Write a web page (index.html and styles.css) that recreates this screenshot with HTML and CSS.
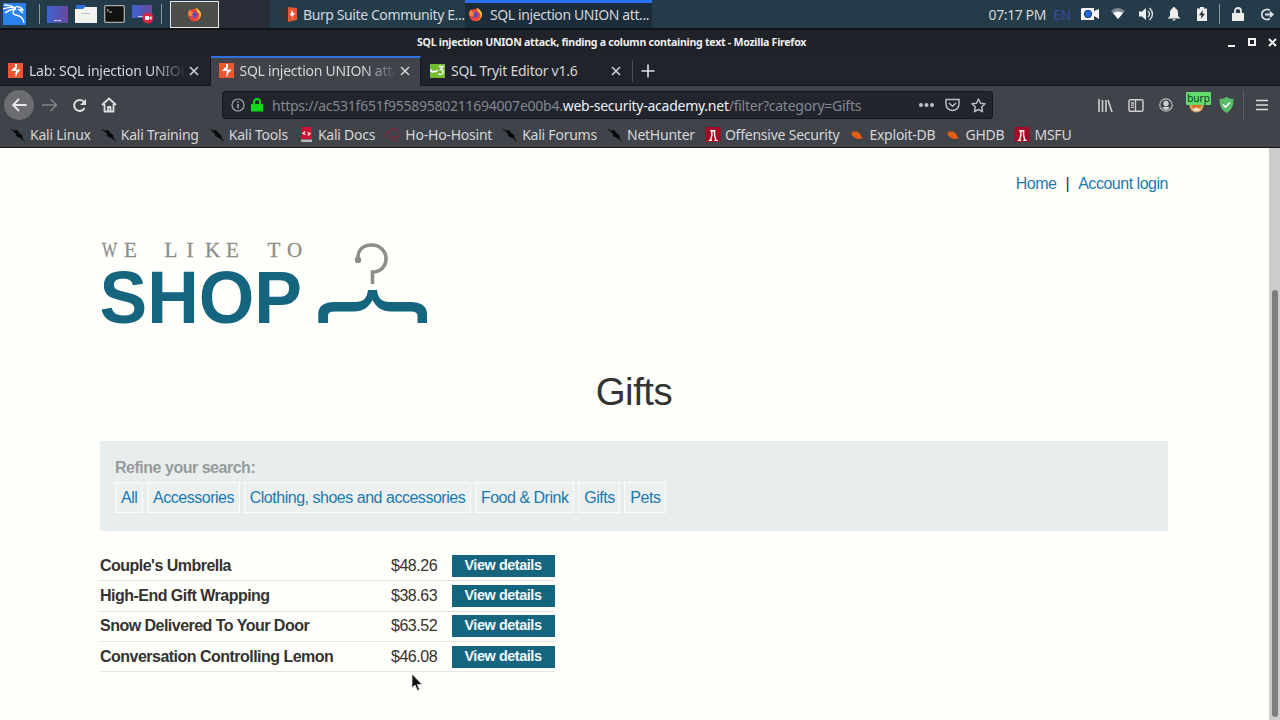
FILE: index.html
```
<!DOCTYPE html>
<html lang="en">
<head>
  <meta charset="UTF-8">
  <title>SQL injection UNION attack, finding a column containing text</title>
  <link rel="stylesheet" href="styles.css">
</head>
<body>

  <!-- shared icons -->
  <svg class="symbols">
    <symbol id="i-bolt" viewBox="0 0 16 16">
      <path fill="#ee5533" d="M0 0h16v16H0z"/>
      <path fill="#fff" d="M7.500 1h2v4L8 7h5.500L9.500 11.500V13L8 15V10l.8-1.500H3L7.500 4z"/>
    </symbol>
    <symbol id="i-fox" viewBox="0 0 16 16">
      <circle cx="8" cy="8.500" r="6.700" fill="#e8433c"/>
      <path fill="#fb9a2c" d="M9 1c3 1 6 4 6 7.500A7 7 0 0 1 8 15c3-1 5-3 5-6S11 5 9 1z"/>
      <path fill="#ffd33d" d="M9.500 .8C13 3 15.500 6 14.500 10c0-3-2-3.500-3.500-5z"/>
      <circle cx="7.600" cy="8.300" r="3" fill="#6246c4"/>
      <path fill="#fb8530" d="M1.300 9c-.3-3 .5-5 2-6.500L4.500 5 7 5.500 5.500 7.500l1 2.500z"/>
    </symbol>
    <symbol id="i-kali" viewBox="0 0 16 16">
      <path fill="#08090b" d="M0 1.500l4.500 2L7 3l3 3.500 3 2.500-1 1 3.500 5-4.500-3.500L8 10 5.500 8.500l1-1L4 5z"/>
    </symbol>
    <symbol id="i-offsec" viewBox="0 0 16 16">
      <path fill="#a30b24" d="M0 0h16v16H0z"/>
      <path fill="none" stroke="#fff" stroke-width="1.500" d="M5 4h5.500M6.800 4v5L5.300 14M9.700 4v5l1.300 5M3.500 14.300h3.500M9.500 14.300h3.500"/>
    </symbol>
    <symbol id="i-edb" viewBox="0 0 16 16">
      <path fill="#e65c14" d="M2.500 6L4 4.500l2 .5 1-1 4 2.500 1 2.500 1.500 2-2.500 1-4-.5L5 10 3 8.500z"/>
    </symbol>
    <symbol id="i-close" viewBox="0 0 10 10">
      <path fill="none" stroke="#d6d7d9" stroke-width="1.500" d="M1 1l8 8M9 1L1 9"/>
    </symbol>
  </svg>

  <div class="panel">
    <div class="launchers">
      <svg width="23" height="22" viewBox="0 0 23 22">
        <rect width="23" height="22" rx="1" fill="#2b82ee"/>
        <path fill="none" stroke="#fff" stroke-width="1.300" d="M1 2c5 0 8 1 11 3M0 6c5-2 9-2 13-1M2 10c4-3 7-4 11-4M12 4c3-1 6 0 8 3l-3-.5M13 6c-4 2-4 5 0 6s7 2 8 8M15 6l5 4"/>
      </svg>
      <span class="line"></span>
      <svg width="21" height="17" viewBox="0 0 21 17">
        <defs><linearGradient id="desk"><stop stop-color="#3d63d2"/><stop offset="1" stop-color="#6b489d"/></linearGradient></defs>
        <path fill="url(#desk)" d="M0 0h21v17H0z"/><path stroke="#dfe3f5" stroke-dasharray="2 .5" d="M7 14.500h7"/>
      </svg>
      <svg width="22" height="20" viewBox="0 0 22 20">
        <path fill="#2c6fe0" d="M1 1h9l2 3h8v6H1z"/><path fill="#f2f2f0" d="M0 5h8l2-2h12v16H0z"/><path stroke="#c6c6c6" d="M6 9.500h9"/>
      </svg>
      <svg width="21" height="18" viewBox="0 0 21 18">
        <rect x=".7" y=".7" width="19.600" height="16.600" rx="1" fill="#11120f" stroke="#a9aaa7" stroke-width="1.300"/>
        <path fill="none" stroke="#ddd" stroke-width=".9" d="M3 4l1.500 1.200L3 6.500M5 7h3"/>
      </svg>
      <svg width="22" height="20" viewBox="0 0 22 20">
        <path fill="url(#desk)" d="M0 1h20v13H0z"/><path stroke="#ccd" d="M6 12.500h5"/>
        <circle cx="16" cy="14" r="5.500" fill="#da2341"/><path fill="#fff" d="M13 12h4v4h-4zM17 14l2.500-2v4z"/>
      </svg>
      <span class="line"></span>
    </div>
    <div class="active-launcher"><svg width="15" height="15"><use href="#i-fox"/></svg></div>
    <div class="panel-gap"></div>
    <div class="task task-burp">
      <svg width="16" height="15" viewBox="0 0 16 15"><path fill="#3a3536" d="M0 2l8-1v13l-7-2z"/><path fill="#e8542f" d="M7 0l9 1v12l-9 2z"/><path fill="#fff" d="M11 2.500l1 3.500h2l-2.500 3.500L11 12V8.500H9z"/></svg>
      <span>Burp Suite Community E...</span>
    </div>
    <div class="task task-firefox">
      <svg width="15" height="15"><use href="#i-fox"/></svg>
      <span>SQL injection UNION att...</span>
    </div>
    <div class="tray">
      <span class="clock">07:17 PM</span>
      <span class="lang">EN</span>
      <svg width="19" height="12" viewBox="0 0 19 12"><path fill="#f5f5f5" d="M1 0h12v3l5-2v10l-5-3v4H0V1z"/><circle cx="7" cy="6" r="3.700" fill="#2569cf" stroke="#183c70"/></svg>
      <svg class="wifi" width="14" height="12" viewBox="0 0 14 12"><path fill="#7d8a92" d="M0 3q7-6 14 0L7 11z"/><path fill="#fff" d="M2 5q5-3 10 0L7 11z"/></svg>
      <svg class="sound" width="15" height="14" viewBox="0 0 15 14"><path fill="#eee" d="M0 4.500h3L7 1v12L3 9.500H0z"/><path fill="none" stroke="#ddd" stroke-width="1.500" d="M9 4q3 3 0 6M10.500 1q6 6 0 12"/></svg>
      <svg class="bell" width="14" height="14" viewBox="0 0 14 14"><path fill="#eeedeb" d="M7 0q1.300 0 1.300 1.300Q11 2.500 11 6v3l2.500 2.500H.5L3 9V6q0-3.500 2.700-4.700Q5.700 0 7 0zM5 12.200h4L7 14z"/></svg>
      <svg class="battery" width="10" height="14" viewBox="0 0 10 14"><path fill="#eeedeb" d="M3 0h4v1.500h3V14H0V1.500h3z"/><path fill="#26303a" d="M6 3L2 8.200h2.500L4 12l4-5.200H5.500z"/></svg>
      <span class="line tray-line"></span>
      <svg class="lock" width="12" height="14" viewBox="0 0 12 14"><path fill="#eeedeb" d="M0 6h12v8H0z"/><path fill="none" stroke="#eeedeb" stroke-width="1.800" d="M3 6V4a3 3 0 0 1 6 0v2"/></svg>
      <svg class="logout" width="14" height="13" viewBox="0 0 14 13"><path fill="none" stroke="#dedfdf" stroke-width="1.800" d="M9.800 2.500A5 5 0 1 0 9.800 10.500M5 6.500h7M10 4l2.700 2.500L10 9"/></svg>
    </div>
  </div>

  <div class="titlebar">
    <span class="window-title">SQL injection UNION attack, finding a column containing text - Mozilla Firefox</span>
    <svg class="window-buttons" width="50" height="12" viewBox="0 0 50 12">
      <path fill="none" stroke="#f0f0f0" stroke-width="2" d="M1 10h7M22 3h6v6h-6zM42 3l7 7M49 3l-7 7"/>
    </svg>
  </div>

  <div class="tabs">
    <div class="tab">
      <svg width="15" height="15"><use href="#i-bolt"/></svg>
      <span class="tab-title fade">Lab: SQL injection UNION</span>
      <svg width="10" height="10"><use href="#i-close"/></svg>
    </div>
    <div class="tab tab-active">
      <svg width="15" height="15"><use href="#i-bolt"/></svg>
      <span class="tab-title fade">SQL injection UNION atta</span>
      <svg width="10" height="10"><use href="#i-close"/></svg>
    </div>
    <div class="tab tab-last">
      <svg width="15" height="14" viewBox="0 0 15 14"><path fill="#73bb31" d="M0 0h15v14H0z"/><path fill="none" stroke="#fff" stroke-width="1.400" d="M1 5v2q1.500 2 3 0 1.500 2 3.500-1M9 2.500h4L10.500 5.500q3 0 2.500 3T8.500 10"/></svg>
      <span class="tab-title">SQL Tryit Editor v1.6</span>
      <svg width="10" height="10"><use href="#i-close"/></svg>
    </div>
    <svg class="new-tab" width="14" height="14" viewBox="0 0 14 14"><path stroke="#e0e1e2" stroke-width="1.600" d="M7 .5v13M.5 7h13"/></svg>
  </div>

  <div class="toolbar">
    <div class="nav">
      <div class="back"><svg width="16" height="14" viewBox="0 0 16 14"><path fill="none" stroke="#e8e8e8" stroke-width="1.800" d="M15.500 7H2M8 1L2 7l6 6"/></svg></div>
      <svg width="16" height="14" viewBox="0 0 16 14"><path fill="none" stroke="#818388" stroke-width="1.500" d="M0 7h14M8.500 1l6 6-6 6"/></svg>
      <svg width="15" height="15" viewBox="0 0 15 15"><path fill="none" stroke="#dedfe0" stroke-width="1.900" d="M11.500 3.500A5.500 5.500 0 1 0 12.500 10"/><path fill="#dedfe0" d="M14 1v6H8z"/></svg>
      <svg width="16" height="16" viewBox="0 0 16 16"><path fill="none" stroke="#dedfe0" stroke-width="1.800" stroke-linejoin="round" d="M1 8l7-6.500L15 8M3.500 7v7.500h9V7M7 14v-4h2.500v4"/></svg>
    </div>
    <div class="urlbar">
      <svg width="14" height="14" viewBox="0 0 14 14"><circle cx="7" cy="7" r="6" fill="none" stroke="#a5a6aa" stroke-width="1.200"/><path stroke="#a5a6aa" stroke-width="1.500" d="M7 6v4.500M7 3.300v1.500"/></svg>
      <svg width="12" height="14" viewBox="0 0 12 14"><path fill="#13d813" d="M0 6h12v7.500H0z"/><path fill="none" stroke="#13d813" stroke-width="1.900" d="M3 6V4a3 3 0 0 1 6 0v2"/></svg>
      <span class="url">https://ac531f651f95589580211694007e00b4.<b>web-security-academy.net</b>/filter?category=Gifts</span>
      <svg width="15" height="4" viewBox="0 0 15 4"><path fill="#c2c2c5" d="M2 0a2 2 0 1 1 0 4 2 2 0 0 1 0-4zM7.500 0a2 2 0 1 1 0 4 2 2 0 0 1 0-4zM13 0a2 2 0 1 1 0 4 2 2 0 0 1 0-4z"/></svg>
      <svg class="pocket" width="15" height="14" viewBox="0 0 15 14"><path fill="none" stroke="#bbbcbf" stroke-width="1.500" d="M1 1.500h13V6a6.500 6.500 0 0 1-13 0zM4 5l3.500 3.300L11 5"/></svg>
      <svg class="star" width="15" height="15" viewBox="0 0 15 15"><path fill="none" stroke="#bbbcbf" stroke-width="1.500" stroke-linejoin="round" d="M7.500 1l2 4.200 4.500.6-3.300 3.200.8 4.700-4-2.200-4 2.200.8-4.700L1 5.800l4.500-.6z"/></svg>
    </div>
    <div class="tools">
      <svg width="15" height="13" viewBox="0 0 15 13"><path stroke="#cdced0" stroke-width="1.600" d="M1 0v13M4.500 1v12M8 1v12M10 1l4 12"/></svg>
      <svg width="16" height="13" viewBox="0 0 16 13"><rect x="1" y=".8" width="14" height="11.500" rx="1.500" fill="none" stroke="#cdced0" stroke-width="1.500"/><path stroke="#cdced0" stroke-width="1.300" d="M7.500 1v11M3 4h3M3 6.200h3M3 8.400h3"/></svg>
      <svg width="14" height="14" viewBox="0 0 14 14"><circle cx="7" cy="7" r="6.200" fill="none" stroke="#b9babd" stroke-width="1.200"/><circle cx="7" cy="5.500" r="2.700" fill="#cdced0"/><path fill="#cdced0" d="M3 10q4-2.500 8 0-4 4-8 0z"/></svg>
      <div class="foxy">
        <svg width="15" height="15" viewBox="0 0 15 15"><circle cx="7.500" cy="7.500" r="7" fill="#d9a46c"/><path fill="#f2e2c8" d="M3 8l4.500 2L12 8q0 5-4.500 5T3 8z"/><path fill="#e06b1f" d="M2 6h11l-2 5-3.500-2L4 11z"/></svg>
        <span class="badge">burp</span>
      </div>
      <svg width="15" height="16" viewBox="0 0 15 16"><path fill="#58bd68" d="M7.500 0q3 2 7 2 .5 10-7 14Q0 12 .5 2q4 0 7-2z"/><path fill="none" stroke="#fff" stroke-width="1.600" d="M4 7.500L6.500 10 11 5.500"/></svg>
      <span class="tool-line"></span>
      <svg class="menu" width="12" height="12" viewBox="0 0 12 12"><path stroke="#dcdddd" stroke-width="1.500" d="M0 1.500h12M0 6h12M0 10.500h12"/></svg>
    </div>
  </div>

  <div class="bookmarks">
    <div class="bookmark"><svg width="16" height="16"><use href="#i-kali"/></svg>Kali Linux</div>
    <div class="bookmark"><svg width="16" height="16"><use href="#i-kali"/></svg>Kali Training</div>
    <div class="bookmark"><svg width="16" height="16"><use href="#i-kali"/></svg>Kali Tools</div>
    <div class="bookmark"><svg width="16" height="16" viewBox="0 0 16 16"><path fill="#cc1230" d="M3 0h11v12H3z"/><path fill="#b7b7b7" d="M3 12.500h11V15H3z"/><path fill="none" stroke="#fff" stroke-width="1.200" d="M7 4.500L5 6.500l2.500 1M10 8.500l2-2L9.500 5.500"/></svg>Kali Docs</div>
    <div class="bookmark"><svg width="16" height="16" viewBox="0 0 16 16"><path fill="none" stroke="#752b37" stroke-width="1.500" d="M1 9q-1-3 3-4 1-4 5-3 4 0 4 4 3 2 1 4M3 10l4 1q3-3 6 0M8 13l4 1"/></svg>Ho-Ho-Hosint</div>
    <div class="bookmark"><svg width="16" height="16"><use href="#i-kali"/></svg>Kali Forums</div>
    <div class="bookmark"><svg width="16" height="16"><use href="#i-kali"/></svg>NetHunter</div>
    <div class="bookmark"><svg width="16" height="15"><use href="#i-offsec"/></svg>Offensive Security</div>
    <div class="bookmark"><svg width="16" height="16"><use href="#i-edb"/></svg>Exploit-DB</div>
    <div class="bookmark"><svg width="16" height="16"><use href="#i-edb"/></svg>GHDB</div>
    <div class="bookmark"><svg width="16" height="15"><use href="#i-offsec"/></svg>MSFU</div>
  </div>

  <div class="viewport">
    <div class="page">
      <div class="top-links"><a>Home</a><span>|</span><a>Account login</a></div>

      <svg class="logo" width="330" height="90" viewBox="100 238 330 90">
        <g class="logo-small">
          <text x="102" y="257" textLength="15" lengthAdjust="spacingAndGlyphs">W</text>
          <text y="257" x="124 144 164.500 186.500 205 226 246 267.500 287">E LIKE TO</text>
        </g>
        <text class="logo-big" x="99.500" y="323.300" textLength="202.500" lengthAdjust="spacingAndGlyphs">SHOP</text>
        <circle cx="358" cy="260" r="3.200" fill="#8d8e8a"/>
        <path fill="none" stroke="#8d8e8a" stroke-width="3.600" d="M358 260C357 250 363 245 371.500 245C380 245 386 251 386 258.500C386 267 380 272 372.500 272V284"/>
        <path fill="#15657f" d="M368 290H377C378 298 381 302 390 302H410C421 302 427 306 427 314V323H417.500V316C417.500 312 414 311.500 409 311.500H391C382 311.500 376 307 372.500 300C369 307 363 311.500 354 311.500H337C331 311.500 328 312 328 316V323H318.300V314C318.300 306 324 302 335 302H355C364 302 367 298 368 290Z"/>
      </svg>

      <h1>Gifts</h1>

      <div class="filters">
        <label>Refine your search:</label>
        <div class="filter-links">
          <a>All</a>
          <a>Accessories</a>
          <a>Clothing, shoes and accessories</a>
          <a>Food &amp; Drink</a>
          <a>Gifts</a>
          <a>Pets</a>
        </div>
      </div>

      <div class="products">
        <div class="product"><b>Couple's Umbrella</b><span>$48.26</span><a class="button">View details</a></div>
        <div class="product"><b>High-End Gift Wrapping</b><span>$38.63</span><a class="button">View details</a></div>
        <div class="product"><b>Snow Delivered To Your Door</b><span>$63.52</span><a class="button">View details</a></div>
        <div class="product"><b>Conversation Controlling Lemon</b><span>$46.08</span><a class="button">View details</a></div>
      </div>
    </div>
    <div class="scrollbar"><div class="thumb"></div></div>
  </div>

  <svg class="cursor" width="12" height="19" viewBox="0 0 12 19">
    <path fill="#111" stroke="#ddd" stroke-width=".8" d="M1 1v14l3-3 2.500 5.500 2-1L6.300 11.500H11z"/>
  </svg>

</body>
</html>
```
FILE: styles.css
```
* {
    box-sizing: border-box;
}

body {
    margin: 0;
    width: 1280px;
    height: 720px;
    overflow: hidden;
    display: flex;
    flex-direction: column;
    font-family: "Noto Sans", sans-serif;
    font-size: 14px;
    letter-spacing: -0.25px;
    color: #d5d6d8;
    background: #fefffb;
}

svg {
    display: block;
    flex: none;
}

.symbols {
    position: absolute;
    width: 0;
    height: 0;
}

/* desktop panel */
.panel {
    flex: none;
    height: 30px;
    display: flex;
    background: #243c4a;
    border-bottom: 2px solid #101419;
    white-space: nowrap;
}

.launchers {
    width: 170px;
    padding-left: 3px;
    display: flex;
    align-items: center;
    gap: 7px;
}

.line {
    width: 1px;
    height: 20px;
    background: #8b989f;
}

.launchers .line:nth-child(2) {
    margin-left: 6px;
}

.active-launcher {
    width: 49px;
    height: 27px;
    margin-top: 1px;
    border: 1px solid #e6e6e3;
    background: #4d4d4a;
    display: flex;
    align-items: center;
    justify-content: center;
}

.panel-gap {
    width: 51px;
    background: #282d37;
}

.task {
    flex: none;
    display: flex;
    align-items: center;
    letter-spacing: -0.4px;
}

.task-burp {
    width: 195px;
    padding-left: 11px;
    gap: 6px;
}

.task-firefox {
    width: 187px;
    padding-left: 3px;
    gap: 7px;
    background: #1b2c3a;
    box-shadow: inset 0 3px #2c70f0;
}

.tray {
    flex: 1;
    display: flex;
    align-items: center;
    justify-content: flex-end;
    padding-right: 6px;
}

.clock {
    letter-spacing: -0.4px;
}

.lang {
    width: 17px;
    margin: 0 11px 0 7px;
    color: #3c4a9c;
}

.wifi {
    margin-left: 11px;
}

.sound {
    margin-left: 14px;
}

.bell {
    margin-left: 13px;
}

.battery {
    margin-left: 16px;
}

.tray-line {
    margin-left: 12px;
}

.lock {
    margin-left: 12px;
}

.logout {
    margin-left: 16px;
}

/* window title */
.titlebar {
    flex: none;
    height: 26px;
    display: flex;
    align-items: center;
    padding: 0 3px 3px 417px;
    justify-content: space-between;
    background: #1f2229;
}

.window-title {
    font-size: 10.6px;
    font-weight: bold;
    letter-spacing: -0.27px;
    color: #eeeeee;
    white-space: nowrap;
}

/* tabs */
.tabs {
    flex: none;
    height: 30px;
    display: flex;
    align-items: center;
    background: #20232b;
    border-bottom: 1px solid #14161b;
}

.tab {
    width: 210.5px;
    height: 30px;
    display: flex;
    align-items: center;
    padding: 0 11px 0 8px;
    gap: 6px;
    border-right: 1px solid #17191e;
}

.tab-active {
    background: #41434a;
    border-top: 2px solid #3470dc;
    padding-bottom: 2px;
    padding-right: 10px;
}

.tab-last {
    width: 212px;
    height: 22px;
    padding-left: 9px;
    border-right: 1px solid #4b4d53;
}

.tab-title {
    flex: 1;
    min-width: 0;
    white-space: nowrap;
}

.fade {
    mask-image: linear-gradient(to right, #000 80%, transparent 103%);
}

.new-tab {
    margin-left: 8px;
}

/* navigation toolbar */
.toolbar {
    flex: none;
    height: 38px;
    display: flex;
    align-items: center;
    background: #41434a;
}

.nav {
    width: 222px;
    padding-left: 4px;
    display: flex;
    align-items: center;
    gap: 14px;
}

.back {
    width: 30px;
    height: 30px;
    border-radius: 50%;
    background: #6b6d70;
    display: flex;
    align-items: center;
    justify-content: center;
    margin-right: -6px;
}

.urlbar {
    width: 771px;
    height: 28px;
    display: flex;
    align-items: center;
    padding: 0 6px 0 8px;
    gap: 6px;
    background: #22252e;
    border: 1px solid #16181d;
    border-radius: 3px;
}

.url {
    flex: 1;
    margin-left: 3px;
    color: #85878d;
    white-space: nowrap;
}

.url b {
    font-weight: normal;
    color: #f0f0f1;
}

.pocket {
    margin-left: 5px;
}

.star {
    margin-left: 5px;
}

.tools {
    flex: 1;
    display: flex;
    align-items: center;
    gap: 15px;
    padding-left: 105px;
}

.foxy {
    position: relative;
    margin-left: 1px;
}

.badge {
    position: absolute;
    left: -3px;
    top: -6px;
    width: 25px;
    height: 13px;
    border-radius: 1px;
    background: #5fdc69;
    color: #14371a;
    font-size: 10px;
    letter-spacing: 0;
    line-height: 12px;
    text-align: center;
}

.tool-line {
    width: 1px;
    height: 31px;
    margin-left: -6px;
    background: #5b5d64;
}

.menu {
    margin-left: -3px;
}

/* bookmarks */
.bookmarks {
    flex: none;
    height: 24px;
    display: flex;
    gap: 10px;
    padding-left: 10px;
    letter-spacing: -0.23px;
    background: #41434a;
    border-bottom: 1px solid #15171a;
}

.bookmark {
    height: 21px;
    display: flex;
    align-items: center;
    gap: 4px;
    white-space: nowrap;
}

/* shop page */
.viewport {
    flex: 1;
    display: flex;
    font-family: "Liberation Sans", Arial, sans-serif;
    font-size: 16px;
    letter-spacing: -0.48px;
    color: #333332;
}

.page {
    flex: 1;
    padding: 24px 101px 0 100px;
}

.page a {
    color: #1a7ab0;
}

.top-links {
    display: flex;
    justify-content: flex-end;
    gap: 9px;
    height: 22px;
    line-height: 23px;
}

.logo {
    margin-top: 44px;
    overflow: visible;
    letter-spacing: 0;
}

.logo-small {
    font-family: "Liberation Serif", serif;
    font-size: 21px;
    fill: #8d8e8a;
    stroke: #8d8e8a;
    stroke-width: 0.3px;
}

.logo-big {
    font-family: "Liberation Sans", Arial, sans-serif;
    font-weight: bold;
    font-size: 75px;
    fill: #15657f;
}

h1 {
    margin: 42px 0 0;
    height: 44px;
    line-height: 44px;
    font-size: 38.4px;
    font-weight: normal;
    text-align: center;
}

.filters {
    height: 90px;
    margin-top: 27px;
    padding: 16px 15px;
    background: #e8eeed;
}

.filters label {
    display: block;
    height: 25px;
    line-height: 21px;
    font-weight: bold;
    color: #969b9a;
}

.filter-links {
    display: flex;
    gap: 4px;
}

.filter-links a {
    height: 31px;
    line-height: 29px;
    padding: 0 4.7px 0 5px;
    border: 1px solid #fbfdfc;
    background: #ecf0ef;
}

.products {
    width: 455px;
    margin-top: 20px;
}

.product {
    height: 30.3px;
    display: flex;
    align-items: center;
    border-bottom: 1px solid #e4e6e3;
}

.product b {
    width: 291px;
    letter-spacing: -0.52px;
}

.product span {
    width: 60.5px;
}

.page .button {
    width: 103px;
    height: 22px;
    line-height: 21px;
    background: #15657f;
    color: #f2f9fa;
    font-size: 14.4px;
    letter-spacing: -0.42px;
    font-weight: bold;
    text-align: center;
}

.scrollbar {
    width: 11px;
    padding: 142px 2px 0 3px;
    background: #cdcecb;
}

.thumb {
    width: 6px;
    height: 427px;
    border-radius: 3px;
    background: #7c7e7b;
}

.cursor {
    position: absolute;
    left: 411px;
    top: 673px;
}
```
